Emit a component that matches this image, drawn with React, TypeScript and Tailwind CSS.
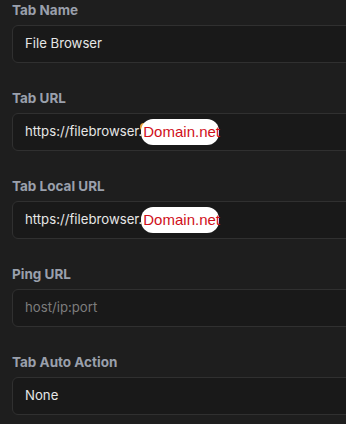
import React from "react";

type Field = {
  label: string;
  value?: React.ReactNode;
  placeholder?: string;
};

const Redacted = ({ smudge }: { smudge?: boolean }) => (
  <span className="relative ml-[1px] inline-flex items-center">
    {smudge && (
      <span className="absolute -left-[3px] top-[1px] h-[8px] w-[9px] rounded-full bg-[#e8a03a]" />
    )}
    <span className="absolute -left-[2px] -top-[3px] h-[26px] w-[78px] rounded-[12px] bg-white" />
    <span className="relative font-['Liberation_Sans',Arial,sans-serif] text-[15px] leading-[20px] text-[#d0101a]">
      Domain.net
    </span>
  </span>
);

const fields: Field[] = [
  { label: "Tab Name", value: "File Browser" },
  {
    label: "Tab URL",
    value: (
      <span className="flex items-center">
        https://filebrowser.
        <Redacted smudge />
      </span>
    ),
  },
  {
    label: "Tab Local URL",
    value: (
      <span className="flex items-center">
        https://filebrowser.
        <Redacted />
      </span>
    ),
  },
  { label: "Ping URL", placeholder: "host/ip:port" },
  { label: "Tab Auto Action", value: "None" },
];

export default function App() {
  return (
    <div className="h-[424px] w-full overflow-hidden bg-[#1e1e1e] pl-3 font-['Inter',sans-serif]">
      {fields.map((f) => (
        <div key={f.label} className="mb-[25px] flex flex-col">
          <label className="text-[13.5px] font-bold leading-5 text-[#9aa0ac]">
            {f.label}
          </label>
          <div className="mt-[5px] flex h-[38px] w-[400px] items-center rounded-md border border-[#303030] bg-[#191919] px-3 text-[13.2px]">
            {f.value ? (
              <span className="text-[#e6e6e6]">{f.value}</span>
            ) : (
              <span className="text-[#7d7d7d]">{f.placeholder}</span>
            )}
          </div>
        </div>
      ))}
    </div>
  );
}
